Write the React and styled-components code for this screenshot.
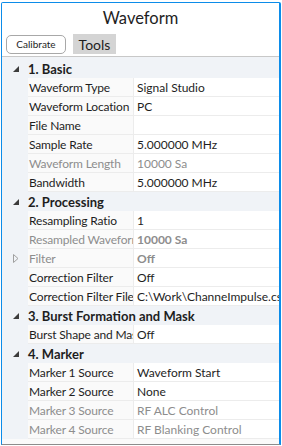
import styled, { createGlobalStyle } from 'styled-components';

const GlobalStyle = createGlobalStyle`
  html, body {
    margin: 0;
    padding: 0;
    background: #fff;
  }
  body {
    font-family: 'Lato', 'Open Sans', sans-serif;
  }
`;

const sections = [
  {
    title: '1. Basic',
    rows: [
      { name: 'Waveform Type', value: 'Signal Studio' },
      { name: 'Waveform Location', value: 'PC' },
      { name: 'File Name', value: '' },
      { name: 'Sample Rate', value: '5.000000 MHz' },
      { name: 'Waveform Length', value: '10000 Sa', disabled: true },
      { name: 'Bandwidth', value: '5.000000 MHz' },
    ],
  },
  {
    title: '2. Processing',
    rows: [
      { name: 'Resampling Ratio', value: '1' },
      { name: 'Resampled Waveform Length', value: '10000 Sa', disabled: true, bold: true },
      { name: 'Filter', value: 'Off', disabled: true, bold: true, expandable: true },
      { name: 'Correction Filter', value: 'Off' },
      { name: 'Correction Filter File', value: 'C:\\Work\\ChanneImpulse.csv' },
    ],
  },
  {
    title: '3. Burst Formation and Mask',
    rows: [{ name: 'Burst Shape and Mask', value: 'Off' }],
  },
  {
    title: '4. Marker',
    rows: [
      { name: 'Marker 1 Source', value: 'Waveform Start' },
      { name: 'Marker 2 Source', value: 'None' },
      { name: 'Marker 3 Source', value: 'RF ALC Control', disabled: true },
      { name: 'Marker 4 Source', value: 'RF Blanking Control', disabled: true },
    ],
  },
];

function Collapse() {
  return (
    <svg width='6' height='6' viewBox='0 0 6 6'>
      <path d='M6 0 L6 6 L0 6 Z' fill='#3c3c3c' />
    </svg>
  );
}

function ExpandArrow() {
  return (
    <svg width='6' height='9' viewBox='0 0 6 9'>
      <path d='M0.5 0.5 L5 4.5 L0.5 8.5 Z' fill='none' stroke='#a0a0a0' strokeWidth='1' />
    </svg>
  );
}

export default function App() {
  return (
    <>
      <GlobalStyle />
      <Page>
        <Frame>
          <Title>Waveform</Title>
          <Toolbar>
            <CalibrateButton>Calibrate</CalibrateButton>
            <ToolsTab>Tools</ToolsTab>
          </Toolbar>
          <Grid>
            {sections.map((section) => (
              <div key={section.title}>
                <CategoryRow>
                  <Gutter>
                    <Collapse />
                  </Gutter>
                  <CategoryTitle>{section.title}</CategoryTitle>
                </CategoryRow>
                {section.rows.map((row) => (
                  <PropRow key={row.name}>
                    <Gutter>{row.expandable && <ExpandArrow />}</Gutter>
                    <NameCell $disabled={row.disabled}>{row.name}</NameCell>
                    <ValueCell $disabled={row.disabled} $bold={row.bold}>
                      {row.value}
                    </ValueCell>
                  </PropRow>
                ))}
              </div>
            ))}
            <Filler />
          </Grid>
        </Frame>
      </Page>
    </>
  );
}

const Page = styled.div`
  padding: 2px 1px 1px 1px;
  height: 446px;
  box-sizing: border-box;
`;

const Frame = styled.div`
  height: 100%;
  box-sizing: border-box;
  border: 1px solid #0c8ce9;
  border-right-width: 2px;
  border-bottom-color: #8c8c8c;
  border-radius: 2px 2px 0 0;
  display: flex;
  flex-direction: column;
  background: #fff;
`;

const Title = styled.div`
  height: 29px;
  display: flex;
  align-items: center;
  justify-content: center;
  font-size: 16.5px;
  color: #1e1e1e;
  padding-top: 1px;
  box-sizing: border-box;
`;

const Toolbar = styled.div`
  display: flex;
  align-items: center;
  gap: 7px;
  padding: 1px 4px 1px 4px;
  height: 22px;
`;

const CalibrateButton = styled.button`
  width: 60px;
  height: 19px;
  border: 1px solid #a8a8a8;
  border-radius: 5px;
  background: #fff;
  font-family: inherit;
  font-size: 10px;
  color: #1e1e1e;
  padding: 0;
`;

const ToolsTab = styled.div`
  width: 43px;
  height: 20px;
  background: #d4d4d4;
  font-size: 14px;
  color: #1e1e1e;
  display: flex;
  align-items: center;
  justify-content: center;
`;

const Grid = styled.div`
  flex: 1;
  border-top: 1px solid #c8c8c8;
  padding-top: 2px;
  background: #f0f3f7;
  display: flex;
  flex-direction: column;
  overflow: hidden;
`;

const CategoryRow = styled.div`
  display: flex;
  align-items: center;
  height: 19px;
  background: #f0f3f7;
`;

const Gutter = styled.div`
  width: 26px;
  flex: none;
  display: flex;
  align-items: center;
  justify-content: center;
  padding-left: 2px;
  box-sizing: border-box;
`;

const CategoryTitle = styled.div`
  font-size: 13px;
  font-weight: 700;
  color: #1e1e1e;
`;

const PropRow = styled.div`
  display: flex;
  height: 19px;
`;

const Cell = styled.div`
  box-sizing: border-box;
  height: 19px;
  border-bottom: 1px solid #ececec;
  display: flex;
  align-items: center;
  white-space: nowrap;
  overflow: hidden;
  font-size: 12px;
  color: ${(p) => (p.$disabled ? '#8d8d8d' : '#1e1e1e')};
`;

const NameCell = styled(Cell)`
  width: 106px;
  flex: none;
  padding-left: 1px;
  letter-spacing: -0.15px;
  background: #fafafa;
  border-right: 1px solid #ececec;
`;

const ValueCell = styled(Cell)`
  flex: 1;
  padding-left: 3px;
  background: #fff;
  font-weight: ${(p) => (p.$bold ? 700 : 400)};
`;

const Filler = styled.div`
  flex: 1;
  background: #fafafa;
`;
